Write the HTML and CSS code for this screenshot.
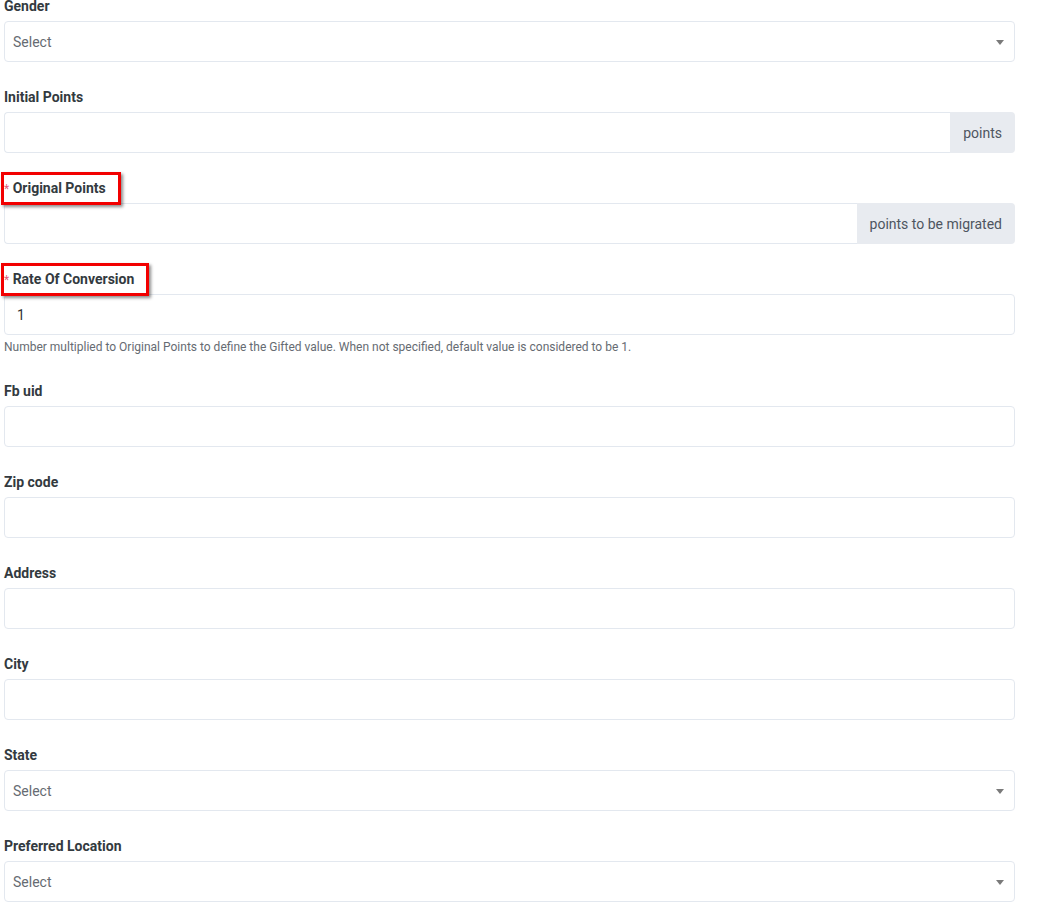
FILE: index.html
```html
<!DOCTYPE html>
<html>
<head>
<meta charset="utf-8">
<link rel="stylesheet" href="styles.css">
</head>
<body>
<form class="form">
  <div class="field">
    <label class="label">Gender</label>
    <div class="select"><span class="placeholder">Select</span><span class="caret"></span></div>
  </div>
  <div class="field">
    <label class="label">Initial Points</label>
    <div class="group"><div class="input grow"></div><div class="addon">points</div></div>
  </div>
  <div class="field">
    <label class="label"><span class="annot"><span class="req">*</span> Original Points</span></label>
    <div class="group"><div class="input grow"></div><div class="addon">points to be migrated</div></div>
  </div>
  <div class="field has-help">
    <label class="label"><span class="annot"><span class="req">*</span> Rate Of Conversion</span></label>
    <div class="input"><span class="value">1</span></div>
    <div class="help">Number multiplied to Original Points to define the Gifted value. When not specified, default value is considered to be 1.</div>
  </div>
  <div class="field">
    <label class="label">Fb uid</label>
    <div class="input"></div>
  </div>
  <div class="field">
    <label class="label">Zip code</label>
    <div class="input"></div>
  </div>
  <div class="field">
    <label class="label">Address</label>
    <div class="input"></div>
  </div>
  <div class="field">
    <label class="label">City</label>
    <div class="input"></div>
  </div>
  <div class="field">
    <label class="label">State</label>
    <div class="select"><span class="placeholder">Select</span><span class="caret"></span></div>
  </div>
  <div class="field">
    <label class="label">Preferred Location</label>
    <div class="select"><span class="placeholder">Select</span><span class="caret"></span></div>
  </div>
</form>
</body>
</html>
```
FILE: styles.css
```css
html, body {
  margin: 0;
  padding: 0;
  background: #fff;
}
body {
  font-family: Roboto, "Liberation Sans", Arial, sans-serif;
  color: #333;
  overflow: hidden;
}
.form {
  width: 1011px;
  margin: -4px 0 0 4px;
  display: flex;
  flex-direction: column;
}
.field {
  display: flex;
  flex-direction: column;
  margin-bottom: 25px;
}
.label {
  display: block;
  font-size: 14px;
  font-weight: 700;
  line-height: 20px;
  height: 20px;
  margin-bottom: 5px;
  color: #333a40;
}
.annot {
  position: relative;
  display: inline-block;
}
.annot::before {
  content: "";
  position: absolute;
  left: -3px;
  top: -6px;
  right: -15px;
  bottom: -6px;
  border: 3px solid #f20000;
  box-shadow: 2px 2px 3px rgba(0,0,0,0.45);
}
.req {
  color: #e0607a;
  font-weight: 400;
  font-size: 12px;
}
.input, .select, .group {
  box-sizing: border-box;
  height: 41px;
}
.input, .select {
  border: 1px solid #e3e8ef;
  border-radius: 4px;
  background: #fff;
  display: flex;
  align-items: center;
}
.group {
  display: flex;
}
.group .input {
  height: 41px;
  border-radius: 4px 0 0 4px;
  border-right: none;
}
.grow {
  flex: 1;
}
.addon {
  box-sizing: border-box;
  height: 41px;
  background: #e8ebf0;
  border-radius: 0 4px 4px 0;
  padding: 0 13px;
  display: flex;
  align-items: center;
  font-size: 14px;
  color: #4e5560;
}
.select {
  padding: 0 8px;
  justify-content: space-between;
}
.placeholder {
  font-size: 14px;
  color: #666b72;
}
.caret {
  width: 0;
  height: 0;
  border-left: 4px solid transparent;
  border-right: 4px solid transparent;
  border-top: 5px solid #7a7a7a;
  margin-right: 2px;
  margin-top: 2px;
}
.value {
  font-size: 14px;
  color: #333;
  padding-left: 12px;
}
.help {
  margin-top: 3px;
  font-size: 12px;
  line-height: 18px;
  color: #666b72;
}
```
